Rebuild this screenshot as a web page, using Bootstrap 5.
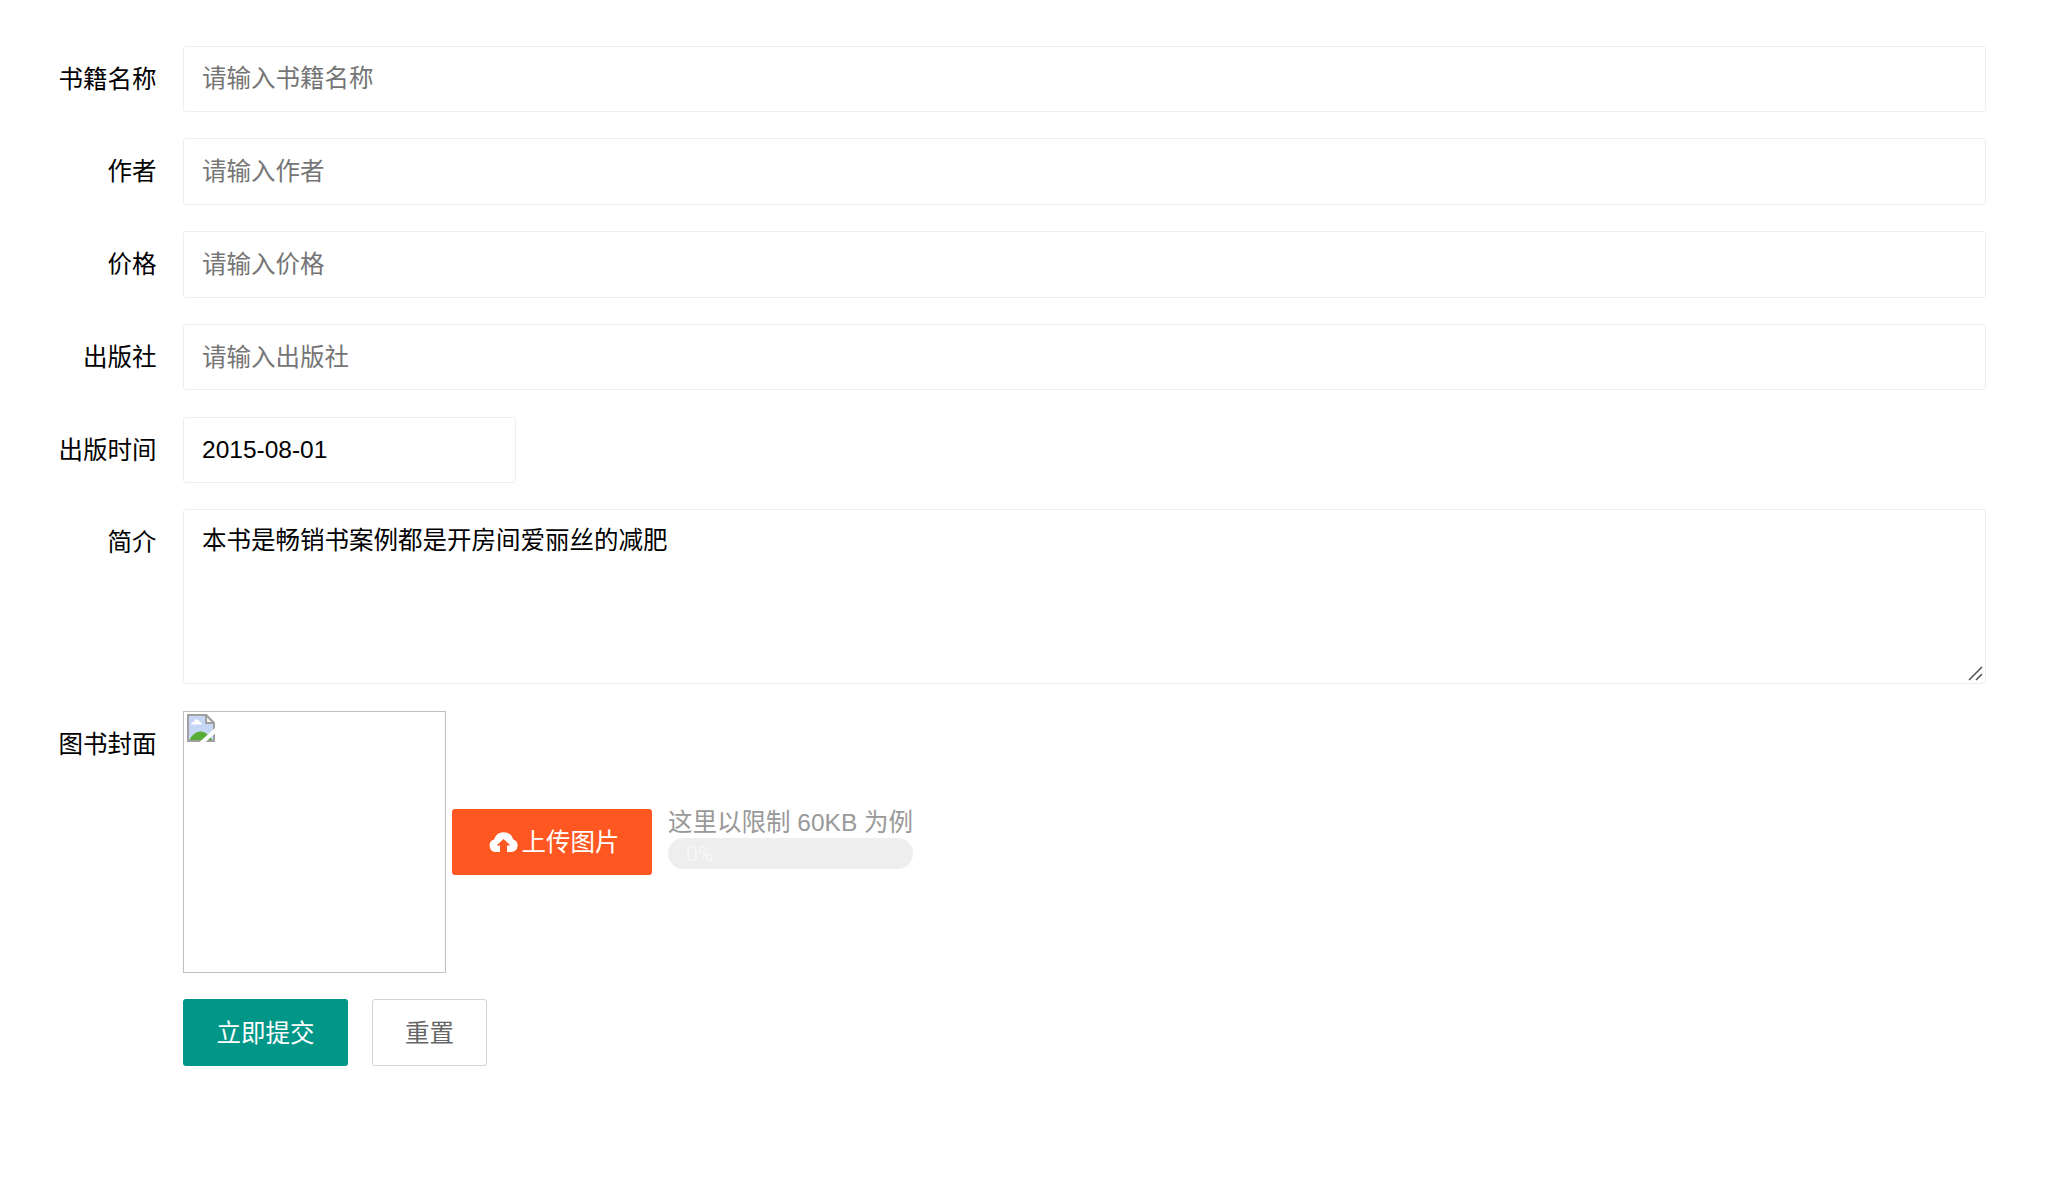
<!DOCTYPE html>
<html lang="zh-CN">
<head>
  <meta charset="UTF-8" />
  <meta name="viewport" content="width=device-width, initial-scale=1.0" />
  <title>添加书籍</title>

  <!-- Bootstrap CSS -->
  <link href="https://cdn.jsdelivr.net/npm/bootstrap@5.3.3/dist/css/bootstrap.min.css" rel="stylesheet">
  <style>
    body {
      font-family: "Liberation Sans", "Noto Sans CJK SC", sans-serif;
      font-size: 24.5px;
      line-height: 31.5px;
      color: #000;
    }
    .book-form {
      padding: 45.5px 82px 0 0;
    }
    .form-item {
      margin-bottom: 26.25px;
    }
    .item-label {
      width: 183px;
      padding: 18px 26.5px 0 0;
      text-align: right;
    }
    .form-control {
      height: 66.5px;
      padding: 1px 18px 0;
      border: 1px solid #eee;
      border-radius: 3px;
      font-size: 24.5px;
      line-height: 31.5px;
      color: #000;
    }
    .form-control::placeholder {
      color: #757575;
    }
    .date-input {
      width: 333px;
      padding-top: 0;
    }
    textarea.form-control {
      height: 175px;
      padding: 15px 18px 0;
      resize: none;
    }
    .grip {
      right: 3px;
      bottom: 3px;
    }
    .cover {
      width: 262.5px;
      height: 262.5px;
      padding: 2px 3px;
      border: 1px solid #c0c0c0;
    }
    .btn {
      height: 66.5px;
      padding: 2px 31px 0;
      border-radius: 3px;
      font-size: 24.5px;
      line-height: 64.5px;
    }
    .btn-upload {
      width: 200px;
      margin-left: 6.5px;
      padding: 2px 0 0 4px;
      background: #ff5722;
      color: #fff;
    }
    .btn-submit {
      width: 165px;
      background: #009688;
      color: #fff;
    }
    .btn-reset {
      width: 115px;
      margin-left: 24px;
      border-color: #d2d2d2;
      background: #fff;
      color: #666;
    }
    .upload-info {
      width: 245px;
      margin: 0 0 7px 16px;
      padding-top: 1px;
      line-height: 30px;
      color: #999;
      white-space: nowrap;
    }
    .progress {
      height: 31px;
      border-radius: 16px;
      background: #eee;
    }
    .progress-num {
      padding-left: 18px;
      font-family: Roboto, sans-serif;
      font-size: 21px;
      font-weight: 300;
      line-height: 33px;
      color: #fafafa;
    }
  </style>
</head>
<body class="bg-white">

<form class="book-form">
  <div class="form-item d-flex">
    <label class="item-label flex-shrink-0" for="name">书籍名称</label>
    <input type="text" class="form-control" id="name" placeholder="请输入书籍名称">
  </div>
  <div class="form-item d-flex">
    <label class="item-label flex-shrink-0" for="author">作者</label>
    <input type="text" class="form-control" id="author" placeholder="请输入作者">
  </div>
  <div class="form-item d-flex">
    <label class="item-label flex-shrink-0" for="price">价格</label>
    <input type="text" class="form-control" id="price" placeholder="请输入价格">
  </div>
  <div class="form-item d-flex">
    <label class="item-label flex-shrink-0" for="press">出版社</label>
    <input type="text" class="form-control" id="press" placeholder="请输入出版社">
  </div>
  <div class="form-item d-flex">
    <label class="item-label flex-shrink-0" for="pubdate">出版时间</label>
    <input type="text" class="form-control date-input" id="pubdate" value="2015-08-01">
  </div>
  <div class="form-item d-flex">
    <label class="item-label flex-shrink-0" for="intro">简介</label>
    <div class="position-relative flex-grow-1">
      <textarea class="form-control d-block" id="intro">本书是畅销书案例都是开房间爱丽丝的减肥</textarea>
      <svg class="grip position-absolute" width="15" height="15" viewBox="0 0 15 15" stroke="#555" stroke-width="1.6">
        <path d="M1 14 14 1M8 14l6-6" />
      </svg>
    </div>
  </div>

  <!-- 图书封面 -->
  <div class="form-item d-flex">
    <span class="item-label flex-shrink-0">图书封面</span>
    <div class="d-flex align-items-center">
      <div class="cover d-flex align-items-start">
        <svg width="28" height="28" viewBox="0 0 28 28">
          <path d="M1 1h18l8 8v18H1z" fill="#c6d7f5" />
          <path d="M4 10.500q0-2.500 3-2.500 1-3.500 3.500-2.500 2 .5 2 2.500 2.500 0 2 2.500z" fill="#fff" />
          <path d="M2 27q4-9.500 12-9.500 6 0 12 9.500z" fill="#57ad35" />
          <path d="M1 27V1h18l8 8v18z" fill="none" stroke="#a0a0a0" stroke-width="2" />
          <path d="M19 1v8h8z" fill="#f4f4f4" stroke="#a0a0a0" stroke-width="2" />
          <path d="M12 28.500 28.500 13.500v5.500L18 28.500z" fill="#fff" />
        </svg>
      </div>
      <button type="button" class="btn btn-upload d-flex align-items-center justify-content-center">
        <svg class="me-1" width="29" height="21" viewBox="0 0 29 21" fill="#fff">
          <path fill-rule="evenodd" d="M7 20a6.500 6.500 0 0 1-1.800-12.700A9.800 9.800 0 0 1 24 7.300 6.500 6.500 0 0 1 22.400 20H18v-6.500h3.500L14.500 7l-7 6.500H11V20z" />
        </svg>
        <span>上传图片</span>
      </button>
      <div class="upload-info">
        <div>这里以限制 60KB 为例</div>
        <div class="progress"><span class="progress-num">0%</span></div>
      </div>
    </div>
  </div>

  <div class="form-item d-flex">
    <span class="item-label flex-shrink-0"></span>
    <button type="button" class="btn btn-submit">立即提交</button>
    <button type="reset" class="btn btn-reset">重置</button>
  </div>
</form>

<!-- Bootstrap JS -->
<script src="https://cdn.jsdelivr.net/npm/bootstrap@5.3.3/dist/js/bootstrap.bundle.min.js"></script>

</body>
</html>
